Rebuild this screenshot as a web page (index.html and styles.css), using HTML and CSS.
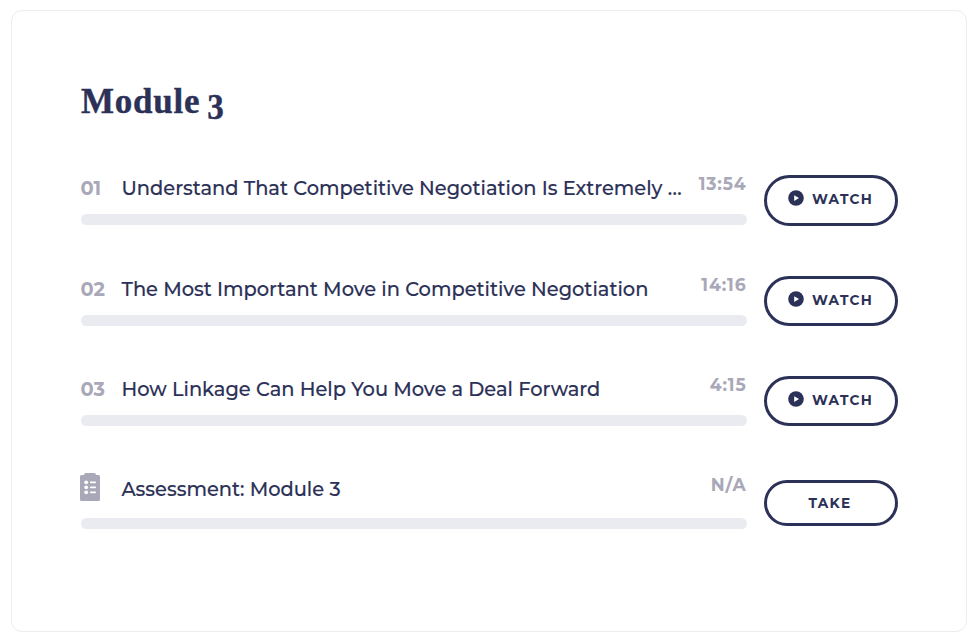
FILE: index.html
```html
<!DOCTYPE html>
<html lang="en">
<head>
<meta charset="utf-8">
<title>Module 3</title>
<link rel="stylesheet" href="styles.css">
</head>
<body>
<main class="card">
  <h1 class="heading"><span class="word">Module</span> <span class="numeral">3</span></h1>
  <section class="lesson first">
    <div class="info">
      <div class="line"><span class="index">01</span><span class="title">Understand That Competitive Negotiation Is Extremely <span class="dots">...</span></span><span class="time">13:54</span></div>
      <div class="bar"></div>
    </div>
    <button class="button tall"><svg class="play" viewBox="0 0 16 16"><circle cx="8" cy="8" r="7.8" fill="#2c3157"/><path d="M6.2 5.2 11 8.1 6.2 11z" fill="#fff"/></svg><span class="label">WATCH</span></button>
  </section>
  <section class="lesson">
    <div class="info">
      <div class="line"><span class="index">02</span><span class="title">The Most Important Move in Competitive Negotiation</span><span class="time">14:16</span></div>
      <div class="bar"></div>
    </div>
    <button class="button"><svg class="play" viewBox="0 0 16 16"><circle cx="8" cy="8" r="7.8" fill="#2c3157"/><path d="M6.2 5.2 11 8.1 6.2 11z" fill="#fff"/></svg><span class="label">WATCH</span></button>
  </section>
  <section class="lesson">
    <div class="info">
      <div class="line"><span class="index">03</span><span class="title">How Linkage Can Help You Move a Deal Forward</span><span class="time">4:15</span></div>
      <div class="bar"></div>
    </div>
    <button class="button"><svg class="play" viewBox="0 0 16 16"><circle cx="8" cy="8" r="7.8" fill="#2c3157"/><path d="M6.2 5.2 11 8.1 6.2 11z" fill="#fff"/></svg><span class="label">WATCH</span></button>
  </section>
  <section class="lesson assessment">
    <div class="info">
      <div class="line"><span class="index"><svg class="clipboard" viewBox="0 0 20 28"><path d="M1.500 2H4Q4 0 6 0h8q2 0 2 2h2.500Q20 2 20 3.500v23q0 1.500-1.500 1.500h-17Q0 28 0 26.500v-23Q0 2 1.500 2z" fill="#a9a8b8"/><g fill="#fff"><circle cx="6.200" cy="9.300" r="1.900"/><circle cx="6.200" cy="14.300" r="1.900"/><circle cx="6.200" cy="19.300" r="1.900"/><rect x="10" y="8.500" width="6" height="1.700" rx=".8"/><rect x="10" y="13.500" width="6" height="1.700" rx=".8"/><rect x="10" y="18.500" width="6" height="1.700" rx=".8"/></g></svg></span><span class="title">Assessment: Module 3</span><span class="time">N/A</span></div>
      <div class="bar"></div>
    </div>
    <button class="button short"><span class="label">TAKE</span></button>
  </section>
</main>
</body>
</html>
```
FILE: styles.css
```css
* { box-sizing: border-box; }
body {
  margin: 0;
  padding: 10px 13px 11px 11px;
  background: #fff;
  color: #2c3157;
  font-family: Montserrat, Inter, sans-serif;
}
.card {
  height: 622px;
  padding: 69px 68px 0 69px;
  border: 1px solid #ededf0;
  border-radius: 11px;
}
.heading {
  display: flex;
  gap: 7px;
  height: 93px;
  margin: 0;
  font: bold 35px/44px "Liberation Serif", serif;
  letter-spacing: .75px;
  -webkit-text-stroke: .4px #2c3157;
}
.numeral { transform: translateY(7px) scaleY(1.08); font-size: 33px; }
.lesson {
  display: grid;
  grid-template-columns: 666px 133px;
  column-gap: 17px;
  height: 100px;
}
.first { height: 101px; }
.line {
  display: flex;
  height: 41px;
  line-height: 30px;
}
.first .line { height: 40.600px; }
.index {
  width: 40.500px;
  flex: none;
  font-size: 19.400px;
  font-weight: 700;
  color: #a9a8b8;
  text-indent: -.5px;
}
.title {
  flex: 1;
  font-size: 19.420px;
  font-weight: 500;
  white-space: nowrap;
  -webkit-text-stroke: .15px #2c3157;
}
.dots { letter-spacing: .4px; }
.time {
  margin-top: -4px;
  padding-right: .5px;
  font-size: 17.200px;
  font-weight: 700;
  letter-spacing: .85px;
  color: #a9a8b8;
}
.bar {
  height: 11px;
  border-radius: 6px;
  background: #eaebf1;
}
.button {
  display: flex;
  align-items: center;
  justify-content: center;
  gap: 8px;
  width: 134px;
  height: 50px;
  margin: 2px 0 0 -.5px;
  padding: 0 0 3px;
  border: 3px solid #2c3157;
  border-radius: 26px;
  background: #fff;
  color: #2c3157;
  font-family: Montserrat, Inter, sans-serif;
  font-size: 13.700px;
  font-weight: 700;
}
.tall { height: 51px; }
.short { height: 46px; margin-top: 6px; padding: 0 1px 0 0; }
.label { letter-spacing: 1.300px; }
.play { width: 16px; height: 16px; margin-top: -2px; }
.clipboard { display: block; width: 20px; height: 28px; margin: -1px 0 0 -1px; }
.assessment .line { height: 43.500px; }
```
